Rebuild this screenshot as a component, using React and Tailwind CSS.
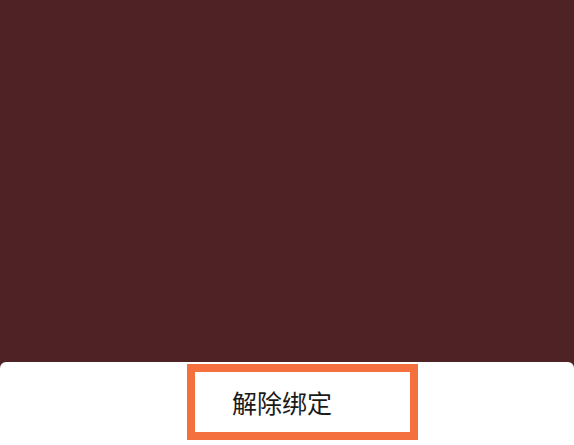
import React from "react";

const App = () => {
  return (
    <div className="flex h-[445px] w-[574px] flex-col overflow-hidden bg-[#4f2325] font-['Noto_Sans_CJK_SC',sans-serif]">
      <div className="h-[362px] shrink-0" />
      <div className="flex-1 rounded-t-[6px] bg-white pt-[2px]">
        <div className="ml-[187px] flex h-[76px] w-[231px] items-center border-8 border-[#f5703f] pl-[37px]">
          <span className="text-[25px] leading-none text-[#1a1a1a]">解除绑定</span>
        </div>
      </div>
    </div>
  );
};

export default App;
